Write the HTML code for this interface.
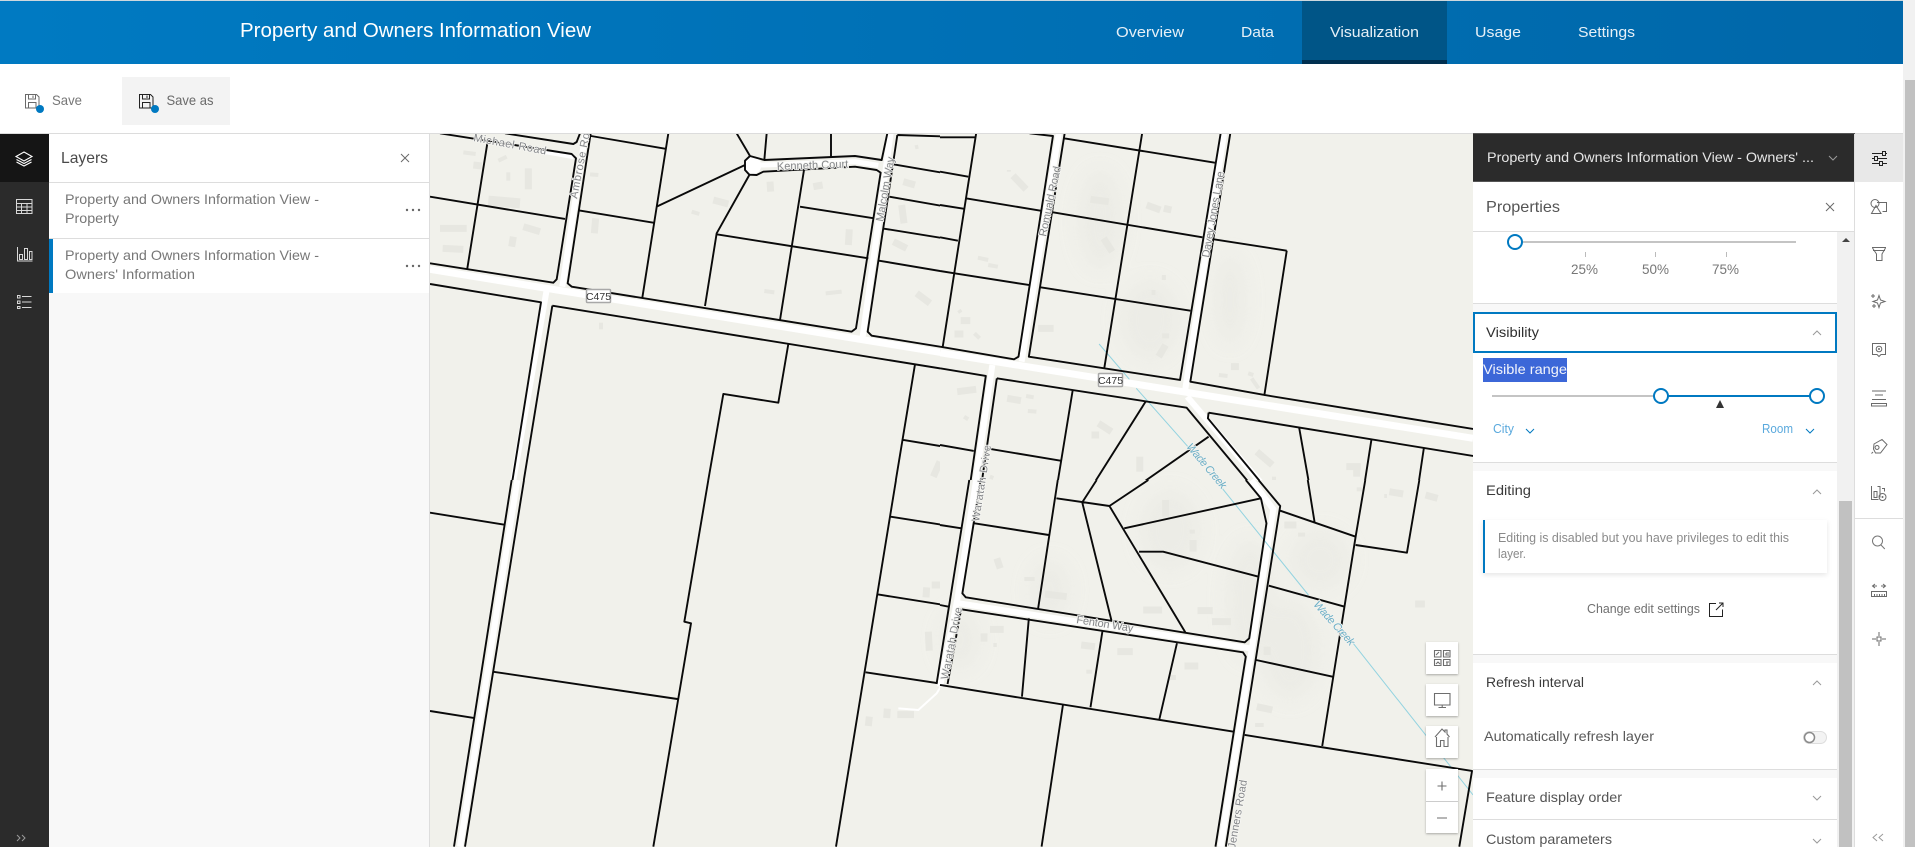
<!DOCTYPE html>
<html lang="en">
<head>
<meta charset="utf-8">
<title>Property and Owners Information View</title>
<style>
html,body{margin:0;padding:0;width:1915px;height:847px;overflow:hidden;background:#fff;font-family:"Liberation Sans",sans-serif}
.a{position:absolute}
svg{position:absolute;left:0;top:0;display:block}
text{font-family:"Liberation Sans",sans-serif}
#map .b{fill:none;stroke:#0a0a0a;stroke-width:1.9;vector-effect:non-scaling-stroke;stroke-linejoin:round}
#map .r{fill:none;stroke:#fff;vector-effect:non-scaling-stroke}
#map .f{fill:none;stroke:#e7e7e1}
#map .f path{vector-effect:non-scaling-stroke}
#map .c{fill:none;stroke:#93d3e0;stroke-width:1;vector-effect:non-scaling-stroke}
#map .l{font-size:11px;fill:#85878a;letter-spacing:.6px;paint-order:stroke;stroke:#f7f7f4;stroke-width:1.5px}
#map .w{font-size:11px;fill:#6aaec6;letter-spacing:.4px;font-style:italic;paint-order:stroke;stroke:#f2f2ee;stroke-width:2px}
#ui .i{fill:none;stroke:#6a6a6a;stroke-width:1}
#ui .d{fill:none;stroke:#222;stroke-width:1}
#ui .w{fill:none;stroke:#d8d8d8;stroke-width:1}
#ui .g{fill:none;stroke:#9a9a9a;stroke-width:1}
</style>
</head>
<body>
<div class="a" style="left:0;top:0;width:1904px;height:64px;background:linear-gradient(90deg,#007ac2,#0067a9);border-top:1px solid #cdd8de;box-sizing:border-box"></div>
<div class="a" style="left:1302px;top:1px;width:145px;height:63px;background:#005587;border-bottom:4px solid #002f50;box-sizing:border-box"></div>
<div class="a" style="left:122px;top:77px;width:108px;height:48px;background:#f3f3f3"></div>
<div class="a" style="left:0;top:133px;width:1904px;height:1px;background:#dcdcdc"></div>
<div class="a" style="left:0;top:134px;width:49px;height:713px;background:#2b2b2b"></div>
<div class="a" style="left:0;top:134px;width:49px;height:48px;background:#151515"></div>
<div class="a" style="left:49px;top:134px;width:381px;height:713px;background:#f8f8f8;border-right:1px solid #ddd;box-sizing:border-box"></div>
<div class="a" style="left:49px;top:134px;width:380px;height:48px;background:#fff;border-bottom:1px solid #ddd;box-sizing:content-box"></div>
<div class="a" style="left:49px;top:183px;width:380px;height:55px;background:#fff;border-bottom:1px solid #ddd"></div>
<div class="a" style="left:49px;top:239px;width:380px;height:54px;background:#fff"></div>
<div class="a" style="left:49px;top:239px;width:4px;height:54px;background:#0079c1"></div>

<svg id="map" class="a" style="left:430px;top:134px" width="1043" height="713" viewBox="430 134 1043 713" xmlns="http://www.w3.org/2000/svg">
<defs>
<filter id="bl" x="-50%" y="-50%" width="200%" height="200%"><feGaussianBlur stdDeviation="9"/></filter>
<clipPath id="c4"><rect x="-100" y="0" width="1630" height="1050"/></clipPath>
<clipPath id="c5"><rect x="0" y="0" width="1600" height="1050"/></clipPath>
<clipPath id="c6"><rect x="-100" y="0" width="1630" height="1200"/></clipPath>
</defs>
<rect x="430" y="134" width="1043" height="713" fill="#f1f1eb"/>
<g filter="url(#bl)" fill="#ebebe5" opacity=".8">
<ellipse cx="1100" cy="220" rx="22" ry="50"/><ellipse cx="1150" cy="320" rx="30" ry="40"/><ellipse cx="1230" cy="300" rx="16" ry="45"/>
<ellipse cx="1250" cy="600" rx="24" ry="60"/><ellipse cx="1290" cy="650" rx="30" ry="50"/><ellipse cx="1170" cy="530" rx="30" ry="40"/>
<ellipse cx="1320" cy="560" rx="30" ry="30"/><ellipse cx="960" cy="640" rx="20" ry="30"/><ellipse cx="1050" cy="590" rx="20" ry="30"/>
</g>
<!-- zoom 4 frame -->
<g transform="translate(430,130) scale(.33333)" clip-path="url(#c4)">
<g class="f">
<path style="stroke-width:4" d="M100 67L137 72M205 92L230 80M235 127V152M480 133L505 135M513 578V598M1003 483L1033 487M1187 490L1235 485M785 245L808 252M1465 50L1455 52"/>
<path style="stroke-width:7" d="M130 105L155 108M295 115V178M30 295L110 295M38 355L100 358M280 290L330 305M250 320L245 350M497 265L493 310M1150 170L1178 165M1020 155L1022 185M850 210L895 222M1258 298L1255 345M1415 225L1422 280M1390 335L1430 355M1420 155L1455 165M1460 490L1500 520M1530 995L1510 1040"/>
<path style="stroke-width:10" d="M175 212L270 220"/>
</g>
<path class="r" style="stroke-width:7" d="M0 418L1560 672"/>
<path class="r" style="stroke-width:6" d="M466 10L397 470M350 480L245 1080M1382 10L1298 620"/>
<path class="r" style="stroke-width:5" d="M945 105L1000 105L1275 95L1345 106M330 62L430 80"/>
<circle cx="968" cy="106" r="26" fill="#fff"/>
<path class="b" d="M30 10L425 72L438 85L380 448L370 458L0 400M225 10L430 42L440 36L450 10M172 40L112 415M0 200L405 267M483 18L705 56M715 10L637 503M482 10L413 460L425 470L1265 605L1278 595L1352 128L1340 120L1275 110L1000 125L980 135L958 134L945 120L945 92L960 78L1003 90L1275 78L1355 90L1372 10M445 241L670 278M680 230L945 105M920 10L960 78M958 135L860 310L825 528M860 313L1315 385M1010 10L1003 90M1203 10V80M1122 120L1050 570M1110 230L1332 265M1402 15L1560 20M1390 103L1560 132M1378 200L1560 232M1362 296L1560 328M1347 392L1560 428M1402 15L1313 605L1325 617L1560 655M0 462L333 517L243 1078M367 527L277 1078M367 527L1560 720M1075 642L1045 818L880 792L830 1078M1455 703L1393 1078M1420 930L1560 953"/>
</g>
<!-- zoom 5 frame -->
<g transform="translate(940,130) scale(.34435,.33333)" clip-path="url(#c5)">
<g class="f">
<path style="stroke-width:4" d="M200 120V125M110 383L140 390M140 405L168 410M255 843L280 845M250 798L272 802M70 860L82 868M55 540L60 548M100 610L115 625M650 435V450M620 480V495M895 730L910 735M810 735L835 738M145 1040L155 1044M970 1040V1050M905 745L925 775"/>
<path style="stroke-width:7" d="M212 137L250 178M475 325L500 365M437 208L490 215M600 225L640 240M650 235L672 240M60 572H88M42 612H68M285 595H330M50 785L105 778M195 805L235 812M655 610V625M635 680L655 645M845 710H868M460 880L498 905M440 915H462M580 980V1025M920 965L965 1005M1180 1010H1222M1210 1020V1040"/>
</g>
<path class="r" style="stroke-width:7" d="M0 668L1548 925"/>
<path class="r" style="stroke-width:6" d="M345 10L237 695M825 10L712 780M152 705L100 1080M718 800L950 1080"/>
<path class="c" d="M462 642L550 748M570 775L720 950M810 1065L820 1080"/>
<path class="b" d="M0 22H105M105 10L8 650M0 125L82 140M0 225L68 236M0 322L52 332M0 423L42 430M75 205L292 242M42 430L258 465M260 10L328 18L228 680L215 688L0 650M362 10L258 680L697 750L815 10M360 25L798 98M587 10L477 715M328 247L762 322M795 328L1007 362M292 472L727 542M843 10L727 755L942 795L1007 362M942 795L1548 897M0 715L133 738L85 1080M165 745L118 1080M165 745L716 833L915 1080M385 783L338 1080M597 815L435 1080M780 920L558 1080M0 945L98 963M135 955L350 992M780 848L778 865L950 1080M780 848L1548 978M1043 893L1075 1080M1253 928L1230 1080M1405 955L1387 1080"/>
</g>
<!-- zoom 6 frame -->
<g transform="translate(430,480) scale(.33333)" clip-path="url(#c6)">
<g class="f">
<path style="stroke-width:7" d="M1505 315H1530M1490 322L1488 352M1495 455L1498 512M1318 710L1315 738M1372 686L1370 714M1402 704H1452"/>
</g>
<path class="r" style="stroke-width:6" d="M262 0L90 1100"/>
<path class="r" style="stroke-width:2" d="M1535 615L1520 640L1465 690L1405 685"/>
<path class="b" d="M245 0L72 1100M282 0L105 1100M0 98L223 134M188 575L742 657M0 693L131 714M835 0L763 425L783 430L670 1100M1398 0L1218 1100M1382 110L1560 138M1342 343L1555 377M1307 577L1560 615"/>
</g>
<!-- zoom 7 frame -->
<g transform="translate(940,480) scale(.34435,.33333)">
<g class="f">
<path style="stroke-width:7" d="M165 235L175 265M145 448H185M128 460V485M410 495L450 500M515 515H560M710 558H750M675 585V600M590 390H645M748 392H792M790 425H845M1000 135H1035M1050 158V170M735 180V215M655 60V110M950 500V525M920 680L965 690M1380 372L1408 372M1410 45L1445 55M1305 35L1345 42M305 342L368 350"/>
<path style="stroke-width:4" d="M245 297H275M425 575H442M155 495H165M725 155H740M915 735H940M1290 48H1298M1210 28H1225"/>
</g>
<path class="r" style="stroke-width:6" d="M105 0L50 360L0 620M55 370L900 505"/>
<path class="r" style="stroke-width:6" d="M905 0L968 88L905 510L815 1100"/>
<path class="c" d="M800 0L1070 345M1200 490L1548 945"/>
<path class="b" d="M85 0L-10 612M0 135L62 145M0 375L25 380M118 0L65 340L75 352L885 487L898 475L948 130L932 55M100 130L316 165M342 0L285 385M338 55L492 78L605 0M413 67L455 0M413 67L498 422M492 78L713 458M535 145L932 55M578 215H648L925 290M62 388L60 395L22 612M62 388L880 517L888 530L800 1100M888 0L932 55M925 0L988 78L830 1100M988 92L1207 170L1235 0M1068 0L1088 128M1207 195L1356 218L1392 0M1207 170L1110 798M955 317L1175 380M918 540L1140 590M0 615L853 755M885 765L1545 873L1508 1100M258 415L238 650M472 452L437 682M688 490L637 718M357 675L295 1100"/>
</g>
<text class="l" transform="translate(473,141) rotate(10.5)">Michael Road</text>
<text class="l" transform="translate(577,199) rotate(-79)">Ambrose Road</text>
<text class="l" transform="translate(777,170) rotate(-2)" textLength="72">Kenneth Court</text>
<text class="l" transform="translate(883,222) rotate(-80)" textLength="66">Malcolm Way</text>
<text class="l" transform="translate(1046,237) rotate(-78)" textLength="72">Romuald Road</text>
<text class="l" transform="translate(1209,258) rotate(-80)" textLength="88">Davey Jones Lane</text>
<text class="l" transform="translate(979,522) rotate(-81)" textLength="78">Waratah Drive</text>
<text class="l" transform="translate(948,680) rotate(-79)" textLength="74">Waratah Drive</text>
<text class="l" transform="translate(1076,623) rotate(9)" textLength="58">Fenton Way</text>
<text class="l" transform="translate(1235,849) rotate(-80)" textLength="70">Jenners Road</text>
<text class="w" transform="translate(1186,447) rotate(50)" textLength="56">Wade Creek</text>
<text class="w" transform="translate(1313,605) rotate(48)" textLength="56">Wade Creek</text>
<rect x="586.500" y="289.500" width="24" height="13" rx="1" fill="#fff" stroke="#a8a8a8" stroke-width="1.500"/>
<text x="598.500" y="300" text-anchor="middle" style="font-size:10.5px" fill="#333">C475</text>
<rect x="1098.500" y="373.500" width="24" height="13" rx="1" fill="#fff" stroke="#a8a8a8" stroke-width="1.500"/>
<text x="1110.500" y="384" text-anchor="middle" style="font-size:10.5px" fill="#333">C475</text>
<g fill="#fff" style="filter:drop-shadow(0 1px 1px rgba(0,0,0,.3))">
<rect x="1426" y="642" width="32" height="32"/><rect x="1426" y="684" width="32" height="32"/><rect x="1426" y="726" width="32" height="32"/><rect x="1426" y="769" width="32" height="64"/>
</g>
<path d="M1426 801.500H1458" stroke="#ccc"/>
<g fill="none" stroke="#6e6e6e" stroke-width="1.100">
<path d="M1434.500 650.500h6.500v6.500h-6.500zM1443.500 650.500h6.500v6.500h-6.500zM1434.500 659.500h6.500v6h-6.500zM1443.500 659.500h6.500v6h-6.500zM1436 655l3-3M1446 653h3M1446 653v2h3M1436 664l2-2 2 2M1446 662h3M1447 662v3"/>
<path d="M1434.500 693.500h15.500v11.500h-15.500zM1442.200 705v2.500M1438.500 707.500h7.500"/>
<path d="M1435 737l7-8 3 3v-2h2v4l2.500 3M1436.500 737v9.500h4v-6h3.500v6h4v-9.500"/>
<path d="M1442 781.500v9M1437.500 786h9M1437 818h10"/>
</g>
</svg>

<div class="a" style="left:1473px;top:133px;width:382px;height:49px;background:#2b2b2b;border:1px solid #555;border-width:1px 1px 1px 0;box-sizing:border-box"></div>
<div class="a" style="left:1473px;top:182px;width:381px;height:49px;background:#fff;border-bottom:1px solid #ddd"></div>
<div class="a" style="left:1473px;top:232px;width:364px;height:615px;background:#fff"></div>
<div class="a" style="left:1837px;top:232px;width:17px;height:615px;background:#f1f1f1"></div>
<div class="a" style="left:1839px;top:501px;width:13px;height:346px;background:#c1c1c1"></div>
<div class="a" style="left:1473px;top:303px;width:364px;height:9px;background:#f8f8f8;border-top:1px solid #ddd;box-sizing:border-box"></div>
<div class="a" style="left:1473px;top:312px;width:364px;height:41px;border:2px solid #0079c1;box-sizing:border-box"></div>
<div class="a" style="left:1483px;top:358px;width:84px;height:24px;background:#3c67d8"></div>
<div class="a" style="left:1473px;top:462px;width:364px;height:9px;background:#f8f8f8;border-top:1px solid #ddd;box-sizing:border-box"></div>
<div class="a" style="left:1483px;top:520px;width:344px;height:53px;background:#fff;border-left:2px solid #0079c1;box-sizing:border-box;box-shadow:0 2px 5px rgba(0,0,0,.1)"></div>
<div class="a" style="left:1473px;top:654px;width:364px;height:9px;background:#f8f8f8;border-top:1px solid #ddd;box-sizing:border-box"></div>
<div class="a" style="left:1473px;top:769px;width:364px;height:9px;background:#f8f8f8;border-top:1px solid #ddd;box-sizing:border-box"></div>
<div class="a" style="left:1473px;top:819px;width:364px;height:1px;background:#ddd"></div>
<div class="a" style="left:1854px;top:134px;width:50px;height:713px;background:#fff;border-left:1px solid #ddd;box-sizing:border-box"></div>
<div class="a" style="left:1855px;top:134px;width:48px;height:48px;background:#e8e8e8"></div>
<div class="a" style="left:1855px;top:518px;width:48px;height:1px;background:#ddd"></div>
<div class="a" style="left:1903px;top:0;width:12px;height:847px;background:#f1f1f1"></div>
<div class="a" style="left:1905px;top:80px;width:10px;height:767px;background:#c1c1c1"></div>

<svg id="ui" width="1915" height="847" viewBox="0 0 1915 847" xmlns="http://www.w3.org/2000/svg">
<!-- header -->
<g fill="#fff">
<text x="240" y="37" font-size="20" textLength="351" lengthAdjust="spacingAndGlyphs">Property and Owners Information View</text>
<g font-size="15">
<text x="1116" y="37" textLength="68" lengthAdjust="spacingAndGlyphs" fill="#e6f0f7">Overview</text>
<text x="1241" y="37" textLength="33" lengthAdjust="spacingAndGlyphs" fill="#e6f0f7">Data</text>
<text x="1330" y="37" textLength="89" lengthAdjust="spacingAndGlyphs" fill="#e6f0f7">Visualization</text>
<text x="1475" y="37" textLength="46" lengthAdjust="spacingAndGlyphs" fill="#e6f0f7">Usage</text>
<text x="1578" y="37" textLength="57" lengthAdjust="spacingAndGlyphs" fill="#e6f0f7">Settings</text>
</g>
</g>
<!-- toolbar -->
<text x="52" y="105" font-size="14" fill="#777" textLength="30" lengthAdjust="spacingAndGlyphs">Save</text>
<text x="166.500" y="105" font-size="14" fill="#6a6a6a" textLength="47" lengthAdjust="spacingAndGlyphs">Save as</text>
<path class="i" d="M25.500 94.500h11l2.500 2.500v11h-13.500zM28.500 94.500v4.500h7v-4.500M33 95.500v2.500M28.500 107.500v-5h7.500v5"/>
<path class="d" d="M139.500 94.500h11l2.500 2.500v11h-13.500zM142.500 94.500v4.500h7v-4.500M147 95.500v2.500M142.500 107.500v-5h7.500v5"/>
<circle cx="40" cy="109" r="4" fill="#0079c1"/><circle cx="155" cy="109" r="4" fill="#0079c1"/>
<!-- left rail -->
<path fill="none" stroke="#fff" stroke-width="1.100" d="M24 152l8 4.500-8 4.500-8-4.500zM16.500 159.500l7.500 4 7.500-4M16.500 162l7.500 4 7.500-4"/>
<path class="w" d="M16.500 199.500h15.500v14h-15.500zM16.500 203.500h15.500M16.500 207h15.500M16.500 210.500h15.500M21.500 203.500v10M27 203.500v10"/>
<path class="w" d="M17.500 247v14h15M19.500 254.500h3v5h-3zM24.500 248.500h3v11h-3zM29.500 251.500h2.500v8h-2.500z"/>
<path class="w" d="M17.500 295.500h2.500v2.500h-2.500zM17.500 301h2.500v2.500h-2.500zM17.500 306.500h2.500v2h-2.500zM22 296.500h9.500M22 302h9.500M22 307.500h9.500"/>
<path class="g" d="M17 835l3 3-3 3M22 835l3 3-3 3"/>
<!-- layers panel -->
<text x="61" y="163" font-size="16" fill="#4a4a4a" textLength="47" lengthAdjust="spacingAndGlyphs">Layers</text>
<path class="i" d="M401 154l8 8M409 154l-8 8"/>
<g font-size="14" fill="#777">
<text x="65" y="204" textLength="254" lengthAdjust="spacingAndGlyphs">Property and Owners Information View -</text>
<text x="65" y="223" textLength="54" lengthAdjust="spacingAndGlyphs">Property</text>
<text x="65" y="260" textLength="254" lengthAdjust="spacingAndGlyphs">Property and Owners Information View -</text>
<text x="65" y="279" textLength="130" lengthAdjust="spacingAndGlyphs">Owners' Information</text>
</g>
<g fill="#666"><circle cx="407" cy="210" r="1.200"/><circle cx="413" cy="210" r="1.200"/><circle cx="419" cy="210" r="1.200"/><circle cx="407" cy="266" r="1.200"/><circle cx="413" cy="266" r="1.200"/><circle cx="419" cy="266" r="1.200"/></g>
<!-- right panel -->
<text x="1487" y="162" font-size="14" fill="#e6e6e6" textLength="327" lengthAdjust="spacingAndGlyphs">Property and Owners Information View - Owners' ...</text>
<path class="g" d="M1829 156l4 4 4-4"/>
<text x="1486" y="212" font-size="16" fill="#555" textLength="74" lengthAdjust="spacingAndGlyphs">Properties</text>
<path class="i" d="M1826 203l8 8M1834 203l-8 8"/>
<path d="M1846 238l4 4h-8z" fill="#444"/>
<path d="M1515 242H1796" stroke="#c4c4c4" stroke-width="2"/>
<circle cx="1515" cy="242" r="7" fill="#fff" stroke="#0079c1" stroke-width="2"/>
<path d="M1585.500 252v5M1655.500 252v5M1726.500 252v5" stroke="#bbb"/>
<g font-size="14" fill="#777">
<text x="1571" y="274" textLength="27" lengthAdjust="spacingAndGlyphs">25%</text>
<text x="1642" y="274" textLength="27" lengthAdjust="spacingAndGlyphs">50%</text>
<text x="1712" y="274" textLength="27" lengthAdjust="spacingAndGlyphs">75%</text>
</g>
<g font-size="14" fill="#3a3a3a">
<text x="1486" y="337" fill="#2f2f2f" textLength="53" lengthAdjust="spacingAndGlyphs">Visibility</text>
<text x="1486" y="495" textLength="45" lengthAdjust="spacingAndGlyphs">Editing</text>
<text x="1486" y="687" textLength="98" lengthAdjust="spacingAndGlyphs">Refresh interval</text>
<text x="1486" y="802" fill="#555" textLength="136" lengthAdjust="spacingAndGlyphs">Feature display order</text>
<text x="1486" y="844" fill="#555" textLength="126" lengthAdjust="spacingAndGlyphs">Custom parameters</text>
<text x="1484" y="741" fill="#5a5a5a" textLength="170" lengthAdjust="spacingAndGlyphs">Automatically refresh layer</text>
</g>
<path class="g" d="M1813 335l4-4 4 4M1813 494l4-4 4 4M1813 685l4-4 4 4M1813 796l4 4 4-4M1813 839l4 4 4-4"/>
<text x="1483" y="374" font-size="14" fill="#f2f4fb" textLength="84" lengthAdjust="spacingAndGlyphs">Visible range</text>
<path d="M1492 396H1661" stroke="#c4c4c4" stroke-width="2"/>
<path d="M1661 396H1817" stroke="#0079c1" stroke-width="2"/>
<circle cx="1661" cy="396" r="7" fill="#fff" stroke="#0079c1" stroke-width="2"/>
<circle cx="1817" cy="396" r="7" fill="#fff" stroke="#0079c1" stroke-width="2"/>
<path d="M1720 400l4 8h-8z" fill="#333"/>
<g font-size="13" fill="#5aa9dd">
<text x="1493" y="433" textLength="21" lengthAdjust="spacingAndGlyphs">City</text>
<text x="1762" y="433" textLength="31" lengthAdjust="spacingAndGlyphs">Room</text>
</g>
<path d="M1526 429l4 4 4-4M1806 429l4 4 4-4" fill="none" stroke="#0079c1"/>
<g font-size="13" fill="#8a8a8a">
<text x="1498" y="542" textLength="291" lengthAdjust="spacingAndGlyphs">Editing is disabled but you have privileges to edit this</text>
<text x="1498" y="558" textLength="28" lengthAdjust="spacingAndGlyphs">layer.</text>
<text x="1587" y="613" fill="#707070" textLength="113" lengthAdjust="spacingAndGlyphs">Change edit settings</text>
</g>
<path class="d" d="M1716 603.500h-6.500v13h13v-7M1716 610l7-7M1719 603h4v4"/>
<rect x="1803.500" y="731.500" width="23" height="12" rx="6" fill="#f3f3f3" stroke="#ddd"/>
<circle cx="1809.500" cy="737.500" r="5" fill="#fff" stroke="#8a8a8a" stroke-width="1.500"/>
<!-- right rail icons -->
<path class="d" d="M1872 153.500h15M1872 158.500h15M1872 163.500h15"/>
<path d="M1882.500 151.500h3v4h-3zM1874.500 156.500h3v4h-3zM1879.500 161.500h3v4h-3z" fill="#e8e8e8" stroke="#222"/>
<path class="i" d="M1871.500 213.500l4.500-8 5 8zM1877 202.500h9.500v9h-4"/>
<circle cx="1875" cy="203.500" r="4" fill="none" stroke="#6a6a6a"/>
<path class="i" d="M1872 247.500h14M1873 250.500h12M1872.500 248L1876.500 254V260.500H1882V254L1885.500 248"/>
<path class="i" d="M1879 295.500l1.500 4.500 4.500 1.500-4.500 1.500-1.500 4.500-1.500-4.500-4.500-1.500 4.500-1.500zM1871 296h4M1873 294v4M1872 306h4M1874 304v4"/>
<path class="i" d="M1872.500 343.500h13v11h-4.500l-2 2-2-2h-4.500z"/>
<circle cx="1879" cy="349" r="2.800" fill="none" stroke="#6a6a6a"/><circle cx="1879" cy="349" r="1" fill="#6a6a6a"/>
<path class="i" d="M1872 391h14M1875 395h8M1872 399.500h14M1871.500 403.500h15v2.500h-15z"/>
<path class="i" d="M1874 444l8-4.500 5 5-6.500 8.500-5 0-2-4zM1877 445.500a2 2 0 1 0 .1 0zM1873 452l-1.500 1.500"/>
<path class="i" d="M1871.500 486v13.500h7M1874 491.500h3v6h-3zM1877.500 486.500h2.500v11M1882 488.500h2.500v3"/>
<circle cx="1882.500" cy="497" r="3.500" fill="none" stroke="#6a6a6a"/><circle cx="1882.500" cy="497" r="1" fill="#6a6a6a"/>
<circle cx="1877.500" cy="541" r="5" fill="none" stroke="#777"/><path d="M1881 545l3.800 4" stroke="#777" fill="none"/>
<path class="i" d="M1871.500 591.500h15v5h-15zM1874.500 594v2.500M1877 594v2.500M1879.500 594v2.500M1882 594v2.500M1884.500 594v2.500M1873 586h4M1875 584l-2.500 2 2.500 2M1885 586h-4M1883 584l2.500 2-2.500 2"/>
<path class="i" d="M1877 637h4v4h-4zM1879 632v4M1879 642v4M1872 639h4M1882 639h4"/>
<path class="g" d="M1877 834l-4 3.500 4 3.500M1883 834l-4 3.500 4 3.500"/>
</svg>
</body>
</html>
